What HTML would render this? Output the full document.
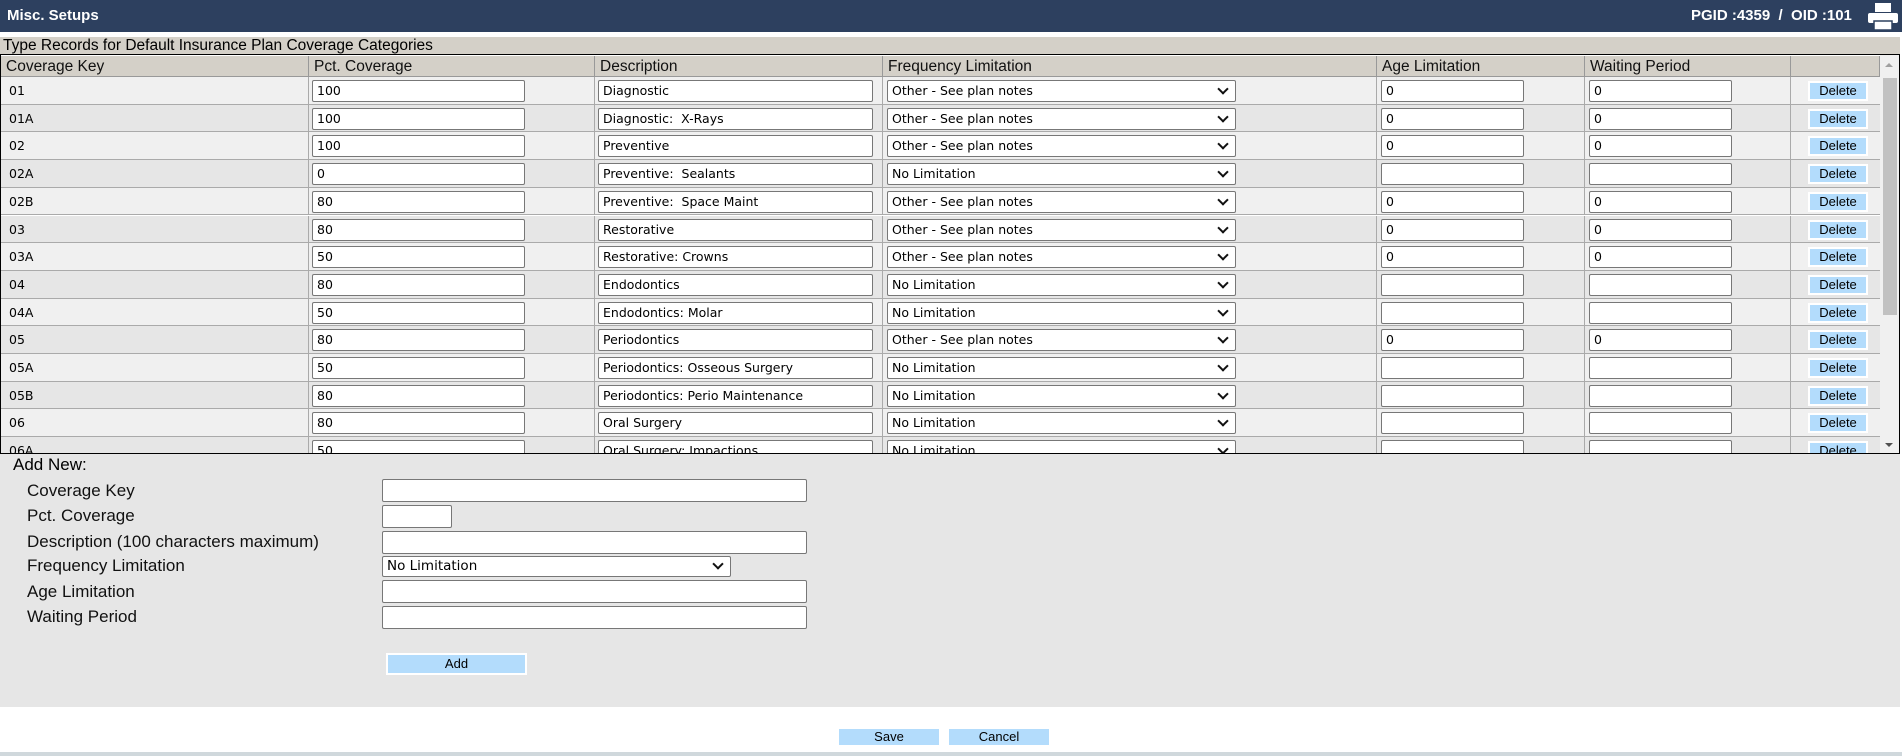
<!DOCTYPE html>
<html><head><meta charset="utf-8"><style>
*{box-sizing:border-box;margin:0;padding:0}
body{width:1902px;height:756px;position:relative;background:#fff;font-family:"Liberation Sans",Arial,sans-serif;overflow:hidden}
.a{position:absolute}
.hdr{left:0;top:0;width:1902px;height:32px;background:#2d405f;color:#fff;font-weight:bold;font-size:15px}
.title{left:0;top:37px;width:1900px;height:18px;background:#d4d0c8;font-size:15.5px;line-height:18px;padding-left:3px;color:#000;border-bottom:1px solid #000}
.th{top:56px;height:21px;background:#d4d0c8;font-size:15.5px;line-height:21px;padding-left:5px;border-right:1px solid #999;border-bottom:1px solid #999;color:#111}
.row{left:0;width:1880px;height:27.7px;border-bottom:1px solid #aaa}
.cell{position:absolute;top:0;height:100%;border-right:1px solid #aaa}
.inp{position:absolute;top:3px;height:22px;background:#fff;border:1px solid #777;border-radius:2px;font-family:"DejaVu Sans",Verdana,sans-serif;font-size:12.5px;line-height:20px;padding-left:4px;white-space:pre;color:#000}
.key{position:absolute;left:8px;top:0;line-height:27px;font-family:"DejaVu Sans",Verdana,sans-serif;font-size:12.5px}
.chev{position:absolute;right:8px;top:4px;width:8px;height:8px;border-right:2px solid #111;border-bottom:2px solid #111;transform:rotate(45deg)}
.del{position:absolute;left:1807px;top:4px;width:60px;height:20px;background:#b3dcfc;border:2px solid #fff;font-size:13px;line-height:16px;text-align:center}
.lbl{left:27px;font-size:17px;color:#111}
.fi{left:382px;width:425px;height:23px;background:#fff;border:1px solid #777;border-radius:2px}
.btn{background:#b3dcfc;border:2px solid #fff;font-size:13px;text-align:center}
</style></head><body>
<div class="a hdr"><span class="a" style="left:7px;top:7px">Misc. Setups</span><span class="a" style="left:1691px;top:7px;font-size:15px">PGID :4359 &nbsp;/ &nbsp;OID :101</span>
<svg class="a" style="left:1866px;top:2px" width="34" height="29" viewBox="0 0 34 29"><rect x="9" y="1" width="16" height="9" fill="#fff"/><rect x="2" y="11" width="30" height="10" rx="2" fill="#fff"/><rect x="8" y="19" width="18" height="9" fill="#fff" stroke="#2d405f" stroke-width="1.5"/></svg></div>
<div class="a title">Type Records for Default Insurance Plan Coverage Categories</div>
<div class="a" style="left:0;top:55px;width:1900px;height:398px;border-left:1px solid #000;border-right:1px solid #000;overflow:hidden" id="tb">
<div class="a th" style="left:0;top:1px;width:308px">Coverage Key</div>
<div class="a th" style="left:308px;top:1px;width:286px">Pct. Coverage</div>
<div class="a th" style="left:594px;top:1px;width:288px">Description</div>
<div class="a th" style="left:882px;top:1px;width:494px">Frequency Limitation</div>
<div class="a th" style="left:1376px;top:1px;width:208px">Age Limitation</div>
<div class="a th" style="left:1584px;top:1px;width:206px;">Waiting Period</div>
<div class="a th" style="left:1790px;top:1px;width:89px"></div>
<div id="rows"></div>
<div class="a" style="left:1879px;top:0;width:20px;height:398px;background:#f0f0f0"></div>
<div class="a" style="left:1882px;top:23px;width:14px;height:237px;background:#c1c1c1"></div>
<div class="a" style="left:1884px;top:8px;width:0;height:0;border-left:4px solid transparent;border-right:4px solid transparent;border-bottom:4px solid #a0a0a0"></div>
<div class="a" style="left:1884px;top:388px;width:0;height:0;border-left:4px solid transparent;border-right:4px solid transparent;border-top:4px solid #505050"></div>
</div>
<div class="a" style="left:0;top:453px;width:1900px;height:254px;background:#e6e6e6;border-top:1px solid #000"></div>
<div class="a" style="left:13px;top:455px;font-size:17px">Add New:</div>
<div class="a lbl" style="top:481px">Coverage Key</div>
<div class="a lbl" style="top:506px">Pct. Coverage</div>
<div class="a lbl" style="top:532px">Description (100 characters maximum)</div>
<div class="a lbl" style="top:556px">Frequency Limitation</div>
<div class="a lbl" style="top:582px">Age Limitation</div>
<div class="a lbl" style="top:607px">Waiting Period</div>
<div class="a fi" style="top:479px"></div>
<div class="a fi" style="top:505px;width:70px"></div>
<div class="a fi" style="top:531px"></div>
<div class="a fi" style="top:556px;width:349px;height:21px;font-size:13.5px;padding-left:4px;line-height:19px;font-family:'DejaVu Sans',Verdana,sans-serif">No Limitation<div class="chev" style="top:3px"></div></div>
<div class="a fi" style="top:580px"></div>
<div class="a fi" style="top:606px"></div>
<div class="a btn" style="left:386px;top:653px;width:141px;height:22px;line-height:18px">Add</div>
<div class="a btn" style="left:837px;top:727px;width:104px;height:20px;line-height:16px">Save</div>
<div class="a btn" style="left:947px;top:727px;width:104px;height:20px;line-height:16px">Cancel</div>
<div class="a" style="left:0;top:752px;width:1902px;height:4px;background:#d0d8dc"></div>
<script>
var d=[["01","100","Diagnostic",1,"0","0"],["01A","100","Diagnostic:  X-Rays",1,"0","0"],["02","100","Preventive",1,"0","0"],["02A","0","Preventive:  Sealants",0,"",""],["02B","80","Preventive:  Space Maint",1,"0","0"],["03","80","Restorative",1,"0","0"],["03A","50","Restorative: Crowns",1,"0","0"],["04","80","Endodontics",0,"",""],["04A","50","Endodontics: Molar",0,"",""],["05","80","Periodontics",1,"0","0"],["05A","50","Periodontics: Osseous Surgery",0,"",""],["05B","80","Periodontics: Perio Maintenance",0,"",""],["06","80","Oral Surgery",0,"",""],["06A","50","Oral Surgery: Impactions",0,"",""]];
var h="";
d.forEach(function(r,i){var t=22+i*27.7;
h+='<div class="a row" style="top:'+t+'px;background:'+(i%2?'#e6e6e6':'#f0f0f0')+'">'+
'<div class="cell" style="left:0;width:308px"><span class="key">'+r[0]+'</span></div>'+
'<div class="cell" style="left:308px;width:286px"><div class="inp" style="left:3px;width:213px">'+r[1]+'</div></div>'+
'<div class="cell" style="left:594px;width:288px"><div class="inp" style="left:3px;width:275px">'+r[2]+'</div></div>'+
'<div class="cell" style="left:882px;width:494px"><div class="inp" style="left:4px;width:349px">'+(r[3]?'Other - See plan notes':'No Limitation')+'<div class="chev"></div></div></div>'+
'<div class="cell" style="left:1376px;width:208px"><div class="inp" style="left:4px;width:143px">'+r[4]+'</div></div>'+
'<div class="cell" style="left:1584px;width:206px"><div class="inp" style="left:4px;width:143px">'+r[5]+'</div></div>'+
'<div class="del">Delete</div></div>';});
document.getElementById("rows").outerHTML=h;
</script>
</body></html>
